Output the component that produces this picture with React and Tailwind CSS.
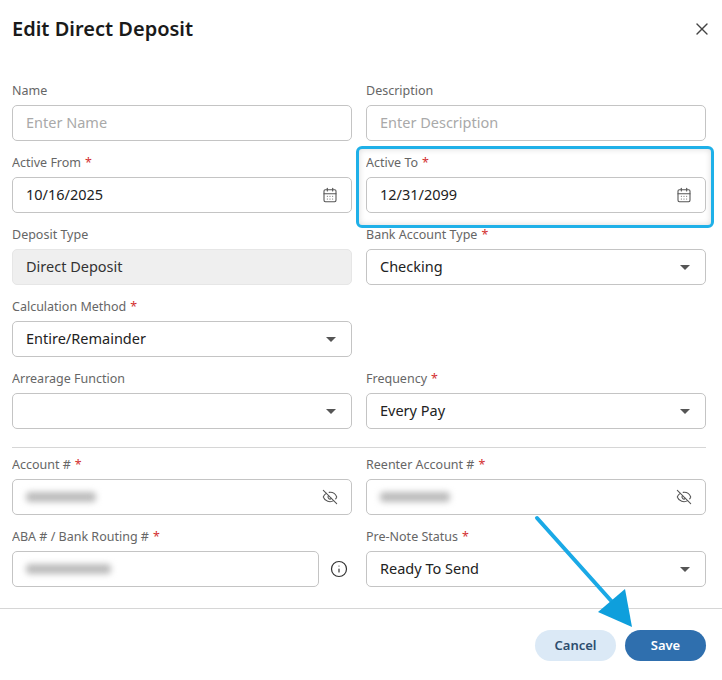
import { X, CalendarDays, EyeOff, Info } from 'lucide-react';

function Label({ text, required }) {
  return (
    <div className="h-5 overflow-hidden text-[12.5px] leading-5 text-[#666]">
      {text}
      {required && <span className="ml-1 text-[#d32f2f]">*</span>}
    </div>
  );
}

function Box({ children, disabled, className = '' }) {
  return (
    <div
      className={`mt-1 flex h-[36px] items-center rounded-[5px] border px-[13px] text-[14.5px] ${
        disabled ? 'border-[#e6e6e6] bg-[#efefef] text-[#333]' : 'border-[#c4c4c4] bg-white text-[#222]'
      } ${className}`}
    >
      {children}
    </div>
  );
}

function Caret() {
  return <div className="ml-auto mr-[2px] h-0 w-0 border-x-[5px] border-t-[5px] border-x-transparent border-t-[#555]" />;
}

function Field({ label, required, children }) {
  return (
    <div>
      <Label text={label} required={required} />
      {children}
    </div>
  );
}

function Blurred({ w }) {
  return <div className={`h-[10px] ${w} rounded bg-[#bbb] blur-[3px]`} />;
}

export default function App() {
  return (
    <div className="relative h-[680px] w-[722px] overflow-hidden bg-white font-['Inter',sans-serif]">
      <div className="flex h-[58px] items-center justify-between pl-[12px] pr-[10px]">
        <h1 className="text-[20px] font-semibold text-[#1a1a1a]">Edit Direct Deposit</h1>
        <X className="h-5 w-5 text-[#444]" strokeWidth={1.6} />
      </div>

      <div className="mt-[23px] grid grid-cols-[340px_340px] gap-x-[14px] gap-y-[12px] pl-[12px]">
        <Field label="Name">
          <Box><span className="text-[#a9a9a9]">Enter Name</span></Box>
        </Field>
        <Field label="Description">
          <Box><span className="text-[#a9a9a9]">Enter Description</span></Box>
        </Field>
        <Field label="Active From" required>
          <Box>10/16/2025<CalendarDays className="ml-auto h-4 w-4 text-[#555]" strokeWidth={1.6} /></Box>
        </Field>
        <Field label="Active To" required>
          <Box>12/31/2099<CalendarDays className="ml-auto h-4 w-4 text-[#555]" strokeWidth={1.6} /></Box>
        </Field>
        <Field label="Deposit Type">
          <Box disabled>Direct Deposit</Box>
        </Field>
        <Field label="Bank Account Type" required>
          <Box>Checking<Caret /></Box>
        </Field>
        <Field label="Calculation Method" required>
          <Box>Entire/Remainder<Caret /></Box>
        </Field>
        <div />
        <Field label="Arrearage Function">
          <Box><Caret /></Box>
        </Field>
        <Field label="Frequency" required>
          <Box>Every Pay<Caret /></Box>
        </Field>
      </div>

      <div className="mb-[7px] mt-[18px] ml-[12px] mr-[16px] border-t border-[#d6d6d6]" />

      <div className="grid grid-cols-[340px_340px] gap-x-[14px] gap-y-[12px] pl-[12px]">
        <Field label="Account #" required>
          <Box><Blurred w="w-[70px]" /><EyeOff className="ml-auto h-4 w-4 text-[#555]" strokeWidth={1.6} /></Box>
        </Field>
        <Field label="Reenter Account #" required>
          <Box><Blurred w="w-[70px]" /><EyeOff className="ml-auto h-4 w-4 text-[#555]" strokeWidth={1.6} /></Box>
        </Field>
        <Field label="ABA # / Bank Routing #" required>
          <div className="flex items-center">
            <Box className="w-[307px]"><Blurred w="w-[85px]" /></Box>
            <Info className="ml-auto mr-[4px] mt-1 h-[18px] w-[18px] text-[#333]" strokeWidth={1.6} />
          </div>
        </Field>
        <Field label="Pre-Note Status" required>
          <Box>Ready To Send<Caret /></Box>
        </Field>
      </div>

      <div className="mt-[21px] border-t border-[#d6d6d6]" />
      <div className="flex justify-end gap-[9px] pr-[16px] pt-[21px]">
        <button className="h-[31px] w-[81px] rounded-full bg-[#dbe9f6] text-[13px] font-semibold text-[#2d4d6e]">Cancel</button>
        <button className="h-[31px] w-[81px] rounded-full bg-[#2f6fae] text-[13px] font-semibold text-white">Save</button>
      </div>

      <div className="absolute left-[356px] top-[146px] h-[82px] w-[358px] rounded-[6px] border-[3px] border-[#1fb0e8] shadow-[inset_0_0_6px_rgba(0,0,0,0.15)]" />

      <svg className="absolute left-0 top-0" width="722" height="680">
        <line x1="537" y1="518" x2="614" y2="604" stroke="#1aa9e6" strokeWidth="4" strokeLinecap="round" />
        <polygon points="632,627 598,612 625,589" fill="#0e9fdc" />
      </svg>
    </div>
  );
}
